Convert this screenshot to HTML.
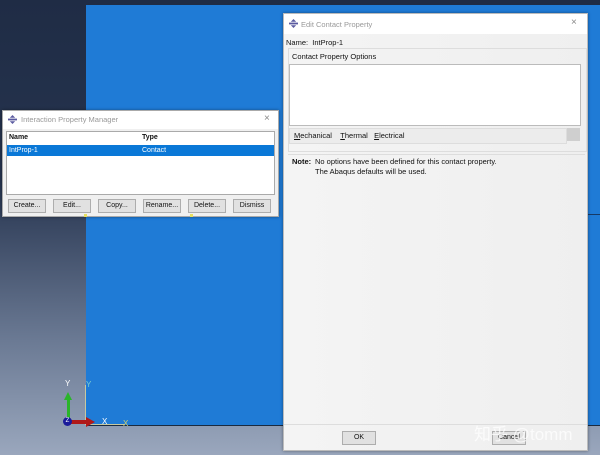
<!DOCTYPE html>
<html><head><style>
body{margin:0;width:600px;height:455px;overflow:hidden;position:relative;font-family:"Liberation Sans",sans-serif;font-size:7.5px;color:#111;background:linear-gradient(#1f2c45 0%,#26344f 40%,#6b7a94 75%,#9aa7bd 100%);}
.abs{position:absolute}
.btn{position:absolute;background:#e1e1e1;border:1px solid #adadad;height:12px;line-height:12px;text-align:center;font-size:7px;color:#111}
.title{color:#999;font-size:7.5px}
.ico{position:absolute;width:9px;height:9px}
</style></head><body>
<div class="abs" style="left:86px;top:5px;width:514px;height:420px;background:#1f7bd6;border-bottom:1px solid #1a2a40"></div>
<div class="abs" style="left:585px;top:214px;width:15px;height:1px;background:#163a66"></div>
<!-- axes -->
<div class="abs" style="left:85px;top:385px;width:1px;height:40px;background:#c8c8a0"></div>
<div class="abs" style="left:85px;top:424px;width:40px;height:1px;background:#c8c8a0"></div>
<div class="abs" style="left:86px;top:380px;color:#7fd0d0;font-size:8px">Y</div>
<div class="abs" style="left:123px;top:419px;color:#d0d070;font-size:8px">X</div>
<div class="abs" style="left:65px;top:379px;color:#fff;font-size:8px">Y</div>
<div class="abs" style="left:102px;top:417px;color:#fff;font-size:8px">X</div>
<div class="abs" style="left:67px;top:398px;width:3px;height:20px;background:#2ab52a"></div>
<div class="abs" style="left:64px;top:392px;width:0;height:0;border-left:4.5px solid transparent;border-right:4.5px solid transparent;border-bottom:8px solid #2ab52a"></div>
<div class="abs" style="left:70px;top:420px;width:18px;height:4px;background:#b01818"></div>
<div class="abs" style="left:86px;top:417px;width:0;height:0;border-top:5px solid transparent;border-bottom:5px solid transparent;border-left:9px solid #b01818"></div>
<div class="abs" style="left:63px;top:417px;width:9px;height:9px;border-radius:50%;background:#1a1a9a;color:#fff;font-size:6px;text-align:center;line-height:9px">Z</div>

<!-- dialog 1 -->
<div class="abs" style="left:2px;top:110px;width:275px;height:105px;background:#f0f0f0;border:1px solid #aaa;box-shadow:0 0 3px rgba(0,0,0,.4)">
 <div class="abs" style="left:0;top:0;width:275px;height:18px;background:#fff"></div>
 <svg class="ico" style="left:5px;top:4px" viewBox="0 0 10 10"><path d="M5 0L8 3H2Z M5 10L8 7H2Z" fill="#5a5aa0"/><rect x="0" y="4" width="10" height="2" fill="#5a5aa0"/></svg>
 <div class="abs title" style="left:18px;top:4px">Interaction Property Manager</div>
 <div class="abs" style="left:261px;top:2px;color:#888;font-size:10px">×</div>
 <div class="abs" style="left:3px;top:20px;width:267px;height:62px;background:#fff;border:1px solid #aaa">
  <div class="abs" style="left:2px;top:2px;font-weight:bold;font-size:7px">Name</div>
  <div class="abs" style="left:135px;top:2px;font-weight:bold;font-size:7px">Type</div>
  <div class="abs" style="left:0;top:13px;width:267px;height:11px;background:#0a78d7;color:#fff;font-size:7px;line-height:11px"><span style="margin-left:2px">IntProp-1</span><span class="abs" style="left:135px">Contact</span></div>
 </div>
 <div class="btn" style="left:5px;top:88px;width:36px">Create...</div>
 <div class="btn" style="left:50px;top:88px;width:36px">Edit...</div>
 <div class="btn" style="left:95px;top:88px;width:36px">Copy...</div>
 <div class="btn" style="left:140px;top:88px;width:36px">Rename...</div>
 <div class="btn" style="left:185px;top:88px;width:36px">Delete...</div>
 <div class="btn" style="left:230px;top:88px;width:36px">Dismiss</div>
</div>
<div class="abs" style="left:84px;top:214px;width:3px;height:3px;background:#e8e060"></div>
<div class="abs" style="left:190px;top:214px;width:3px;height:3px;background:#e8e060"></div>

<!-- dialog 2 -->
<div class="abs" style="left:283px;top:13px;width:303px;height:436px;background:linear-gradient(90deg,#f4f4f4,#efefef);border:1px solid #bbb;box-shadow:0 0 3px rgba(0,0,0,.4)">
 <div class="abs" style="left:0;top:0;width:303px;height:20px;background:#fff"></div>
 <svg class="ico" style="left:5px;top:5px" viewBox="0 0 10 10"><path d="M5 0L8 3H2Z M5 10L8 7H2Z" fill="#5a5aa0"/><rect x="0" y="4" width="10" height="2" fill="#5a5aa0"/></svg>
 <div class="abs title" style="left:17px;top:6px">Edit Contact Property</div>
 <div class="abs" style="left:287px;top:3px;color:#888;font-size:10px">×</div>
 <div class="abs" style="left:2px;top:24px">Name:&nbsp; IntProp-1</div>
 <div class="abs" style="left:4px;top:34px;width:297px;height:102px;border:1px solid #ddd"></div>
 <div class="abs" style="left:8px;top:38px">Contact Property Options</div>
 <div class="abs" style="left:5px;top:50px;width:290px;height:60px;background:#fff;border:1px solid #bbb"></div>
 <div class="abs" style="left:5px;top:114px;width:276px;height:14px;background:#ececec;border:1px solid #ddd"></div>
 <div class="abs" style="left:10px;top:117px"><u>M</u>echanical &nbsp;&nbsp;&nbsp;<u>T</u>hermal &nbsp;&nbsp;<u>E</u>lectrical</div>
 <div class="abs" style="left:283px;top:114px;width:13px;height:13px;background:#cfcfcf"></div>
 <div class="abs" style="left:4px;top:140px;width:297px;height:270px;border-top:1px solid #ddd"></div>
 <div class="abs" style="left:8px;top:143px"><b>Note:</b></div>
 <div class="abs" style="left:31px;top:143px;line-height:9.5px">No options have been defined for this contact property.<br>The Abaqus defaults will be used.</div>
 <div class="abs" style="left:0;top:410px;width:303px;height:1px;background:#ddd"></div>
 <div class="btn" style="left:58px;top:417px;width:32px">OK</div>
 <div class="btn" style="left:208px;top:417px;width:32px">Cancel</div>
</div>
<div class="abs" style="left:474px;top:420px;color:rgba(255,255,255,.75);font-size:17px;font-family:'Liberation Sans','Noto Sans CJK SC',sans-serif">知乎 @tomm</div>
</body></html>
